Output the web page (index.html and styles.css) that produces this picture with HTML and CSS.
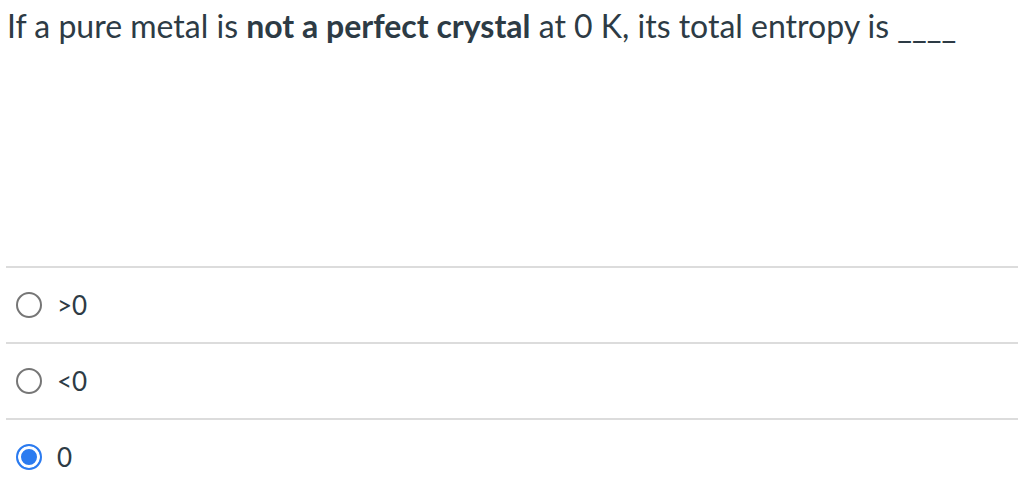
FILE: index.html
```html
<!DOCTYPE html>
<html lang="en">
<head>
    <meta charset="UTF-8">
    <title>Quiz Question</title>
    <link rel="stylesheet" href="styles.css">
</head>
<body>
    <div class="question">
        <p>If a pure metal is <strong>not a perfect crystal</strong> at 0 K, its total entropy is ____</p>
    </div>
    <div class="answers">
        <label class="answer">
            <span class="radio"></span>
            <span class="answer-text">&gt;0</span>
        </label>
        <label class="answer">
            <span class="radio"></span>
            <span class="answer-text">&lt;0</span>
        </label>
        <label class="answer">
            <span class="radio checked"></span>
            <span class="answer-text">0</span>
        </label>
    </div>
</body>
</html>
```

FILE: styles.css
```css
body {
    font-family: Lato, "Open Sans", sans-serif;
    margin: 0;
    padding: 0;
    background-color: white;
    color: #2d3b45;
}
.question {
    height: 266px;
    padding: 0 7px;
}
.question p {
    font-size: 32px;
    margin: 0;
    padding-top: 6px;
}
.question strong {
    font-weight: bold;
}
.answers {
    margin-left: 6px;
}
.answer {
    display: flex;
    align-items: center;
    gap: 15px;
    padding: 24px 10px;
    border-top: 2px solid #dcdcdc;
}
.radio {
    box-sizing: border-box;
    width: 26px;
    height: 26px;
    border: 2px solid #767676;
    border-radius: 50%;
}
.radio.checked {
    border-color: #2b7bf0;
    background-color: #2b7bf0;
    box-shadow: inset 0 0 0 3px white;
}
.answer-text {
    font-size: 26px;
    line-height: 26px;
}
```
